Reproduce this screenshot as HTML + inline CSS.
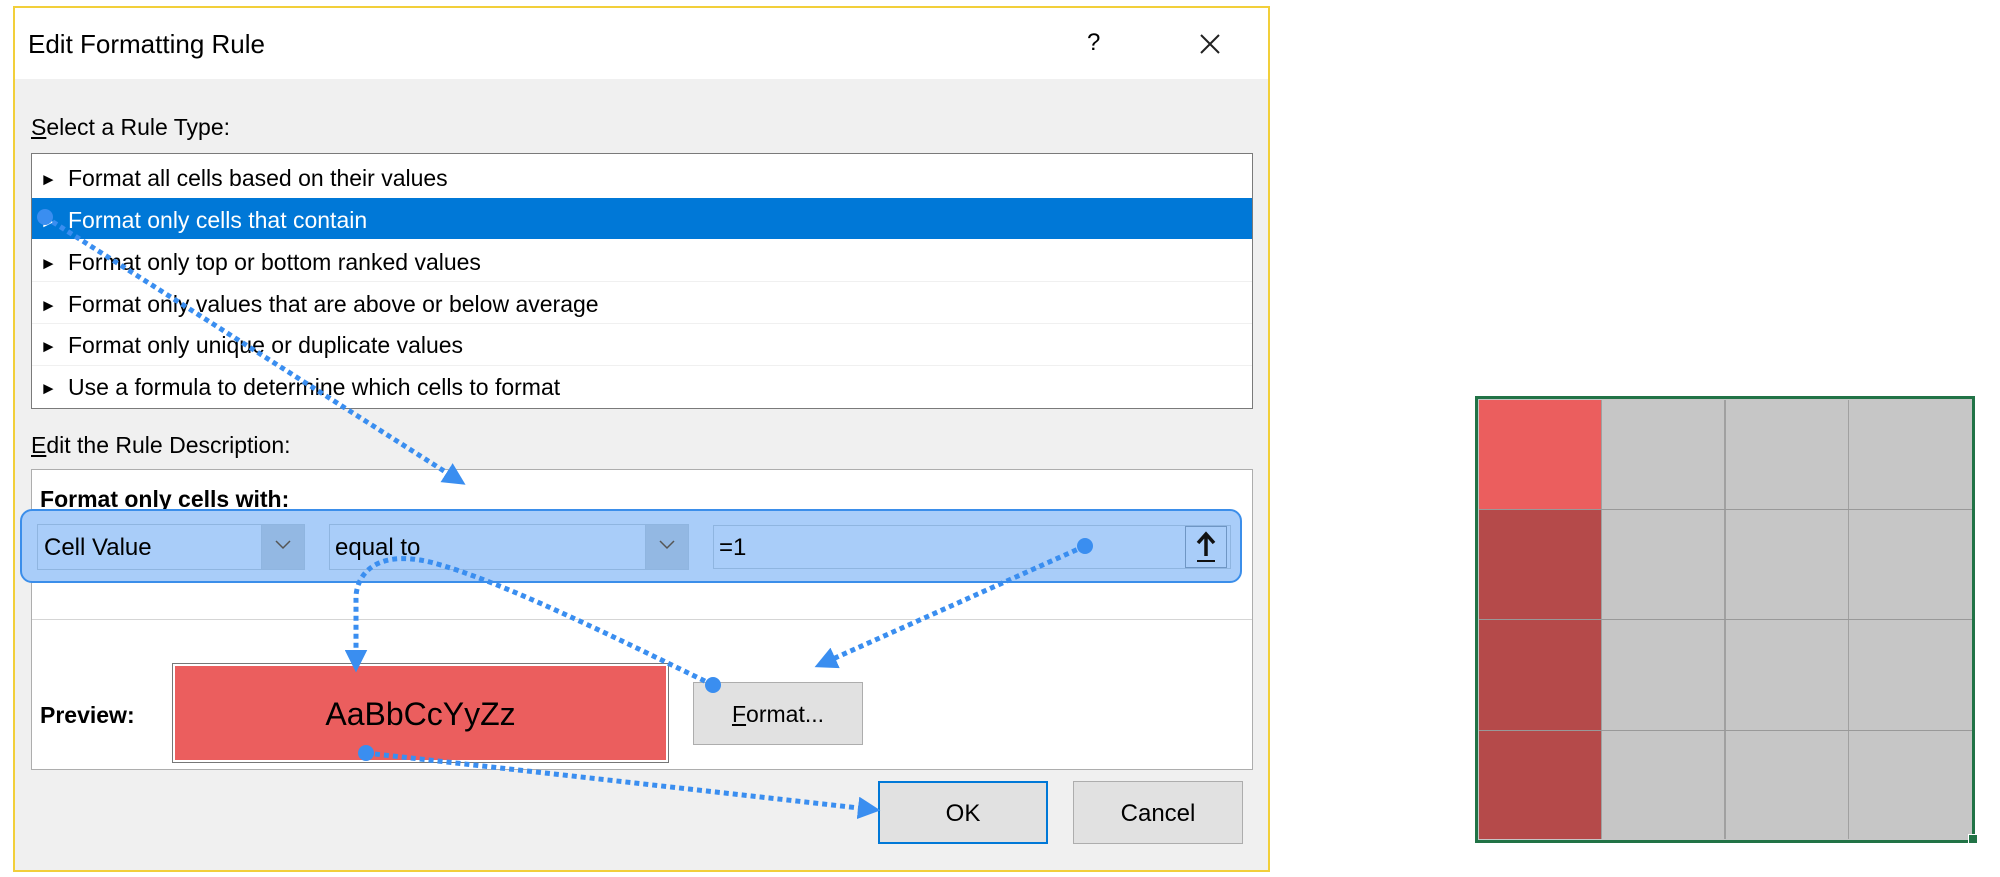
<!DOCTYPE html>
<html><head><meta charset="utf-8"><style>
*{margin:0;padding:0;box-sizing:border-box}
body{width:2000px;height:877px;background:#fff;position:relative;overflow:hidden;font-family:"Liberation Sans",sans-serif;color:#000}
.a{position:absolute}
.t{position:absolute;font-size:23px;white-space:nowrap;line-height:1}
.ar{position:absolute;font-size:17px;line-height:1;left:40px}
u{text-decoration:underline}
</style></head><body>
<div class="a" style="left:13px;top:6px;width:1257px;height:866px;border:2px solid #f2cf3a;background:#f0f0f0"></div>
<div class="a" style="left:15px;top:8px;width:1253px;height:71px;background:#fff"></div>
<div class="t" style="left:28px;top:31px;font-size:26px">Edit Formatting Rule</div>
<div class="t" style="left:1087px;top:31px;font-size:24px">?</div>
<svg class="a" style="left:1199px;top:33px" width="22" height="22"><path d="M2 2L20 20M20 2L2 20" stroke="#222" stroke-width="2"/></svg>
<div class="t" style="left:31px;top:116px"><u>S</u>elect a Rule Type:</div>
<div class="a" style="left:31px;top:153px;width:1222px;height:256px;border:1px solid #7a7a7a;background:#fff"></div>
<div class="a" style="left:32px;top:198px;width:1220px;height:41px;background:#0078d7"></div>
<div class="a" style="left:32px;top:281px;width:1220px;height:1px;background:#f0f0f0"></div>
<div class="a" style="left:32px;top:323px;width:1220px;height:1px;background:#f0f0f0"></div>
<div class="a" style="left:32px;top:365px;width:1220px;height:1px;background:#f0f0f0"></div>
<div class="ar" style="top:171px">►</div><div class="t" style="left:68px;top:167px">Format all cells based on their values</div>
<div class="ar" style="top:213px;color:#fff">►</div><div class="t" style="left:68px;top:209px;color:#fff">Format only cells that contain</div>
<div class="ar" style="top:255px">►</div><div class="t" style="left:68px;top:251px">Format only top or bottom ranked values</div>
<div class="ar" style="top:297px">►</div><div class="t" style="left:68px;top:293px">Format only values that are above or below average</div>
<div class="ar" style="top:338px">►</div><div class="t" style="left:68px;top:334px">Format only unique or duplicate values</div>
<div class="ar" style="top:380px">►</div><div class="t" style="left:68px;top:376px">Use a formula to determine which cells to format</div>
<div class="t" style="left:31px;top:434px"><u>E</u>dit the Rule Description:</div>
<div class="a" style="left:31px;top:469px;width:1222px;height:301px;border:1px solid #adadad;background:#fff"></div>
<div class="t" style="left:40px;top:488px;font-weight:bold">F<u>o</u>rmat only cells with:</div>
<div class="a" style="left:20px;top:509px;width:1222px;height:74px;border:2px solid #3b8eea;border-radius:12px;background:#a9cdf9"></div>
<div class="a" style="left:37px;top:524px;width:268px;height:46px;border:1px solid #8fb5e0"></div>
<div class="a" style="left:261px;top:525px;width:43px;height:44px;background:#93b8e3;border-left:1px solid #8fb5e0"></div>
<svg class="a" style="left:275px;top:540px" width="16" height="10"><path d="M1 1L8 8L15 1" stroke="#555" fill="none" stroke-width="1.5"/></svg>
<div class="t" style="left:44px;top:536px;font-size:24px">Cell Value</div>
<div class="a" style="left:329px;top:524px;width:360px;height:46px;border:1px solid #8fb5e0"></div>
<div class="a" style="left:645px;top:525px;width:43px;height:44px;background:#93b8e3;border-left:1px solid #8fb5e0"></div>
<svg class="a" style="left:659px;top:540px" width="16" height="10"><path d="M1 1L8 8L15 1" stroke="#555" fill="none" stroke-width="1.5"/></svg>
<div class="t" style="left:335px;top:536px;font-size:24px">equal to</div>
<div class="a" style="left:713px;top:525px;width:518px;height:44px;border:1px solid #8fb5e0"></div>
<div class="a" style="left:1185px;top:526px;width:42px;height:42px;border:1px solid #6f96c4;background:#a9cdf9"></div>
<svg class="a" style="left:1193px;top:530px" width="26" height="34"><path d="M13 26V5M5 13L13 4L21 13" stroke="#111" stroke-width="3.5" fill="none"/><path d="M4 31H22" stroke="#111" stroke-width="2"/></svg>
<div class="t" style="left:719px;top:536px;font-size:24px">=1</div>
<div class="a" style="left:32px;top:619px;width:1220px;height:1px;background:#d5d5d5"></div>
<div class="t" style="left:40px;top:704px;font-weight:bold">Preview:</div>
<div class="a" style="left:172px;top:663px;width:497px;height:100px;border:1px solid #777;background:#eb5e5e;box-shadow:inset 0 0 0 2px #fff"></div>
<div class="t" style="left:172px;top:698px;width:497px;text-align:center;font-size:32px">AaBbCcYyZz</div>
<div class="a" style="left:693px;top:682px;width:170px;height:63px;border:1px solid #adadad;background:#e1e1e1"></div>
<div class="t" style="left:693px;top:703px;width:170px;text-align:center"><u>F</u>ormat...</div>
<div class="a" style="left:878px;top:781px;width:170px;height:63px;border:2px solid #0078d7;background:#e1e1e1"></div>
<div class="t" style="left:878px;top:802px;width:170px;text-align:center;font-size:24px">OK</div>
<div class="a" style="left:1073px;top:781px;width:170px;height:63px;border:1px solid #adadad;background:#e1e1e1"></div>
<div class="t" style="left:1073px;top:802px;width:170px;text-align:center;font-size:24px">Cancel</div>
<svg class="a" style="left:0;top:0" width="1300" height="877">
<defs><marker id="m" markerWidth="4.5" markerHeight="4.5" refX="2" refY="2.25" orient="auto"><path d="M0 0L4.5 2.25L0 4.5z" fill="#3a8ef0"/></marker></defs>
<g stroke="#3a8ef0" stroke-width="5" stroke-dasharray="5 4" fill="none" marker-end="url(#m)">
<path d="M45 217L455 478"/>
<path d="M1085 546L826 662"/>
<path d="M713 685C620 640 500 580 430 562C370 548 355 580 356 600L356 660"/>
<path d="M366 753L868 809"/>
</g>
<g fill="#3a8ef0"><circle cx="45" cy="217" r="8"/><circle cx="1085" cy="546" r="8"/><circle cx="713" cy="685" r="8"/><circle cx="366" cy="753" r="8"/></g>
</svg>
<div class="a" style="left:1475px;top:396px;width:500px;height:447px;border:3px solid #217346;background:#c6c6c6"></div>
<div class="a" style="left:1479px;top:400px;width:122px;height:109px;background:#eb5e5e"></div>
<div class="a" style="left:1479px;top:509px;width:122px;height:330px;background:#b54a4a"></div>
<div class="a" style="left:1601px;top:400px;width:1px;height:439px;background:#a0a0a0"></div>
<div class="a" style="left:1724px;top:400px;width:2px;height:439px;background:#a0a0a0"></div>
<div class="a" style="left:1848px;top:400px;width:1px;height:439px;background:#a0a0a0"></div>
<div class="a" style="left:1479px;top:509px;width:493px;height:1px;background:#999"></div>
<div class="a" style="left:1479px;top:619px;width:493px;height:1px;background:#999"></div>
<div class="a" style="left:1479px;top:730px;width:493px;height:1px;background:#999"></div>
<div class="a" style="left:1968px;top:834px;width:10px;height:10px;background:#217346;border:1px solid #fff"></div>
</body></html>
